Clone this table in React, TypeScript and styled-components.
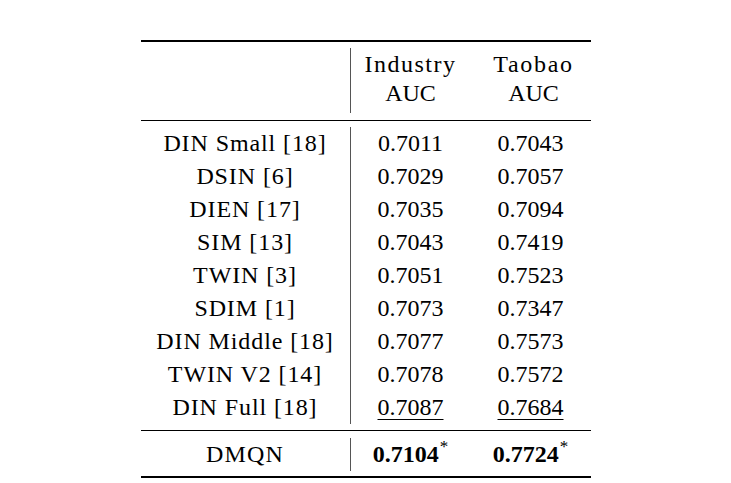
import React from "react";
import styled, { createGlobalStyle } from "styled-components";

const GlobalStyle = createGlobalStyle`
  html, body { margin: 0; padding: 0; background: #ffffff; }
  body { font-family: "Liberation Serif", "Times New Roman", serif; color: #000000; }
`;

const Page = styled.div`
  width: 731px;
  height: 483px;
  overflow: hidden;
  box-sizing: border-box;
  padding-top: 40px;
  display: flex;
  justify-content: center;
  align-items: flex-start;
`;

const Table = styled.div`
  width: 450px;
  display: flex;
  flex-direction: column;
  border-top: 2px solid #000;
  border-bottom: 2px solid #000;
`;

const Section = styled.div<{ $pt: number; $pb: number; $rule?: boolean }>`
  display: grid;
  grid-template-columns: 210px 120px 120px;
  padding: ${(p) => p.$pt}px 0 ${(p) => p.$pb}px;
  border-top: ${(p) => (p.$rule ? "1px solid #000" : "none")};
`;

const Column = styled.div<{
  $divider?: boolean;
  $lh: number;
  $top?: number;
  $bottom?: number;
  $shift?: number;
}>`
  display: flex;
  flex-direction: column;
  align-items: center;
  line-height: ${(p) => p.$lh}px;
  padding: ${(p) => p.$top ?? 0}px 0 ${(p) => p.$bottom ?? 0}px ${(p) => p.$shift ?? 0}px;
  border-right: ${(p) => (p.$divider ? "1px solid #555" : "none")};
  font-size: 24px;
`;

const Label = styled.div<{ $ls?: number }>`
  white-space: nowrap;
  letter-spacing: ${(p) => p.$ls ?? 0.9}px;
`;

const Value = styled.div<{ $underline?: boolean; $bold?: boolean }>`
  white-space: nowrap;
  font-weight: ${(p) => (p.$bold ? 700 : 400)};
  text-decoration: ${(p) => (p.$underline ? "underline" : "none")};
  text-decoration-thickness: 1px;
  text-underline-offset: 4px;
`;

const Star = styled.sup`
  font-size: 17px;
  font-weight: 400;
  color: #000;
  line-height: 0;
  vertical-align: 10px;
  margin-left: 1px;
`;

const rows: { name: string; ind: string; tb: string; under?: boolean }[] = [
  { name: "DIN Small [18]", ind: "0.7011", tb: "0.7043" },
  { name: "DSIN [6]", ind: "0.7029", tb: "0.7057" },
  { name: "DIEN [17]", ind: "0.7035", tb: "0.7094" },
  { name: "SIM [13]", ind: "0.7043", tb: "0.7419" },
  { name: "TWIN [3]", ind: "0.7051", tb: "0.7523" },
  { name: "SDIM [1]", ind: "0.7073", tb: "0.7347" },
  { name: "DIN Middle [18]", ind: "0.7077", tb: "0.7573" },
  { name: "TWIN V2 [14]", ind: "0.7078", tb: "0.7572" },
  { name: "DIN Full [18]", ind: "0.7087", tb: "0.7684", under: true },
];

export default function App() {
  return (
    <>
      <GlobalStyle />
      <Page>
        <Table>
          <Section $pt={6} $pb={7}>
            <Column $divider $lh={29} $top={2} $bottom={5} />
            <Column $lh={29} $top={2} $bottom={5}>
              <Label $ls={1.5}>Industry</Label>
              <Label $ls={0}>AUC</Label>
            </Column>
            <Column $lh={29} $top={2} $bottom={5} $shift={6}>
              <Label $ls={1.7}>Taobao</Label>
              <Label $ls={0}>AUC</Label>
            </Column>
          </Section>
          <Section $pt={6} $pb={6} $rule>
            <Column $divider $lh={33}>
              {rows.map((r) => (
                <Label key={r.name}>{r.name}</Label>
              ))}
            </Column>
            <Column $lh={33}>
              {rows.map((r) => (
                <Value key={r.name} $underline={r.under}>
                  {r.ind}
                </Value>
              ))}
            </Column>
            <Column $lh={33}>
              {rows.map((r) => (
                <Value key={r.name} $underline={r.under}>
                  {r.tb}
                </Value>
              ))}
            </Column>
          </Section>
          <Section $pt={7} $pb={5} $rule>
            <Column $divider $lh={33}>
              <Label $ls={1.2}>DMQN</Label>
            </Column>
            <Column $lh={33}>
              <Value $bold>
                0.7104<Star>*</Star>
              </Value>
            </Column>
            <Column $lh={33}>
              <Value $bold>
                0.7724<Star>*</Star>
              </Value>
            </Column>
          </Section>
        </Table>
      </Page>
    </>
  );
}
